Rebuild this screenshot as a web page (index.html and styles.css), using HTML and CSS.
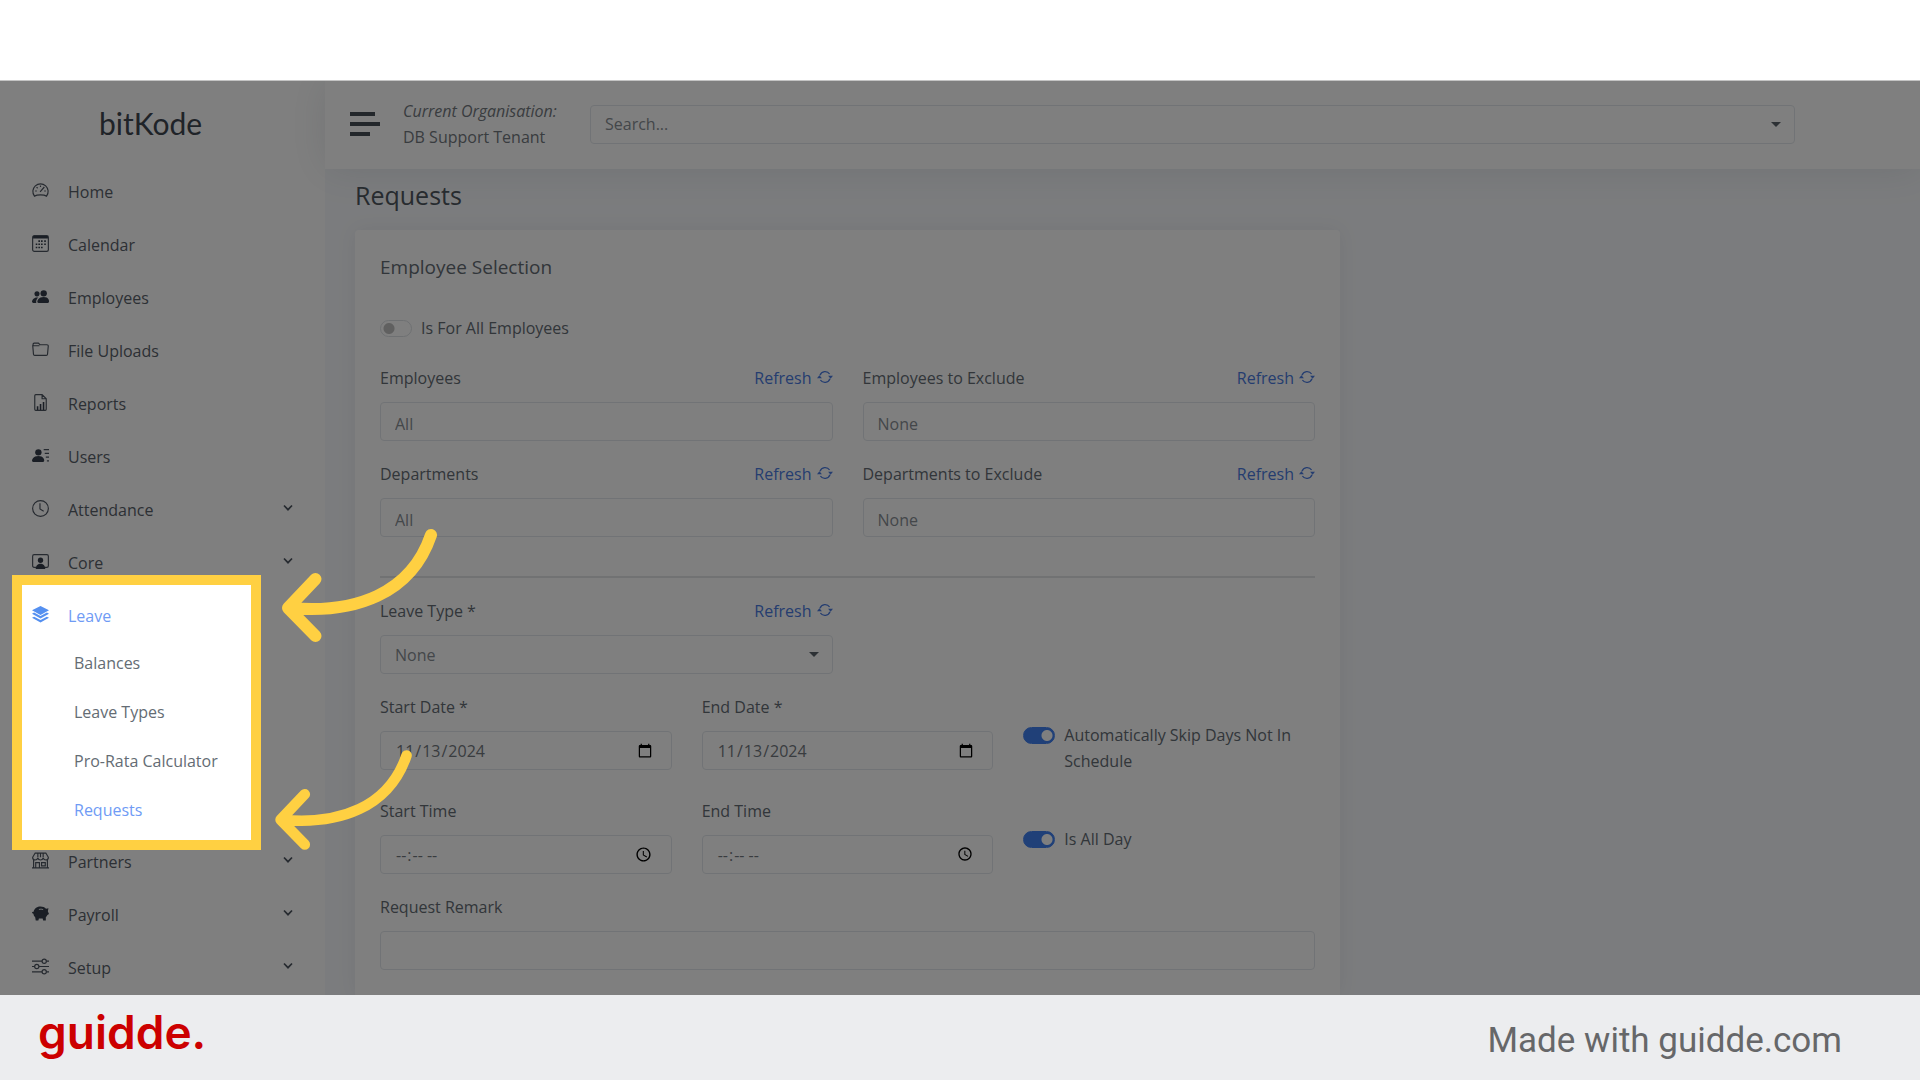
FILE: index.html
```html
<!DOCTYPE html>
<html lang="en-US">
<head>
<meta charset="utf-8">
<title>Requests</title>
<link rel="stylesheet" href="styles.css">
</head>
<body>
<svg class="defs" aria-hidden="true">
  <symbol id="refresh" viewBox="0 0 16 16"><path d="M3 6.2A5.4 5.4 0 0 1 12.6 5M13 9.8A5.4 5.4 0 0 1 3.4 11" fill="none" stroke="currentColor" stroke-width="1.3"/><path d="M0 9.2 2.4 6.2 4.9 9.2ZM16 6.8 13.6 9.8 11.1 6.8Z" fill="currentColor"/></symbol>
  <symbol id="chevron" viewBox="0 0 10 8"><path d="M1 1.5 5 5.7 9 1.5" fill="none" stroke="currentColor" stroke-width="1.7"/></symbol>
  <symbol id="arrow" viewBox="0 0 168 126"><path d="M39.500 57 12 86 39.500 114M14 86C79 92 135 72 155 13" fill="none" stroke="currentColor" stroke-width="12" stroke-linecap="round" stroke-linejoin="round"/></symbol>
</svg>

<main class="screen">
  <nav class="sidebar">
    <a class="brand" href="#">bitKode</a>
    <ul class="menu">
      <li><a class="item" href="#"><svg class="icon" viewBox="0 0 16 16"><path d="M2.300 13.300A7.200 7.200 0 1 1 13.700 13.300C11 11.800 5 11.800 2.300 13.300Z" class="line"/><path d="M8 3.200v1.600M3 8.500h1.500M11.500 8.500H13M4.300 4.900l1 1M7.600 9.300l4-4.600" class="line"/></svg>Home</a></li>
      <li><a class="item" href="#"><svg class="icon" viewBox="0 0 16 16"><rect x=".6" y=".6" width="14.800" height="14.800" rx="1.500" class="line"/><path d="M1 1h14v2.200H1ZM6 5h1.500v1.500H6ZM8.500 5H10v1.500H8.500ZM11.500 5H13v1.500h-1.500ZM3.500 8H5v1.500H3.500ZM6 8h1.500v1.500H6ZM8.500 8H10v1.500H8.500ZM11.500 8H13v1.500h-1.500ZM3.500 11H5v1.500H3.500ZM6 11h1.500v1.500H6ZM8.500 11H10v1.500H8.500Z"/></svg>Calendar</a></li>
      <li><a class="item" href="#"><svg class="icon" viewBox="0 0 16 16"><circle cx="11" cy="5" r="3"/><path d="M6 14s-1 0-1-1 1-4.500 6-4.500 5 3.500 5 4.500-1 1-1 1Z"/><circle cx="4.700" cy="5.500" r="2.400"/><path d="M4 14C3.500 11.500 5 9.800 6 9 2 8.300 0 11 0 13c0 1 1 1 1 1Z"/></svg>Employees</a></li>
      <li><a class="item" href="#"><svg class="icon" viewBox="0 0 16 16"><path d="M1 4.500V3Q1 2 2 2H6L7.500 3.500H14Q15.400 3.500 15.300 5L14.600 12.500Q14.500 13.500 13.500 13.500H2.500Q1.500 13.500 1.400 12.500L.7 4.500H7" class="line"/></svg>File Uploads</a></li>
      <li><a class="item" href="#"><svg class="icon" viewBox="0 0 16 16"><path d="M9.500.6H3.500Q2.600.6 2.600 1.600V14.400Q2.600 15.400 3.500 15.400H12.500Q13.400 15.400 13.400 14.400V4.500ZM9.500.6V4.500H13.400" class="line"/><path d="M4.500 11.500H6V15H4.500ZM7.300 9.500H8.800V15H7.300ZM10.100 7.500H11.600V15H10.100Z"/></svg>Reports</a></li>
      <li><a class="item" href="#"><svg class="icon" viewBox="0 0 16 16"><circle cx="6" cy="5" r="3"/><path d="M1 14s-1 0-1-1 1-4.500 6-4.500 5.500 3.500 5.500 4.500-1 1-1 1Z"/><path d="M11 2.500h5M12 6h4M13 9.500h3M14 13h2" class="line"/></svg>Users</a></li>
      <li><a class="item" href="#"><svg class="icon" viewBox="0 0 16 16"><circle cx="8" cy="8" r="7.400" class="line"/><path d="M7.500 3v5.500l3.500 2" class="line"/></svg>Attendance<svg class="caret"><use href="#chevron"/></svg></a></li>
      <li><a class="item" href="#"><svg class="icon" viewBox="0 0 16 16"><path d="M4 13.500H2Q.6 13.500.6 12V3Q.6 1.600 2 1.600H14Q15.400 1.600 15.400 3V12Q15.400 13.500 14 13.500H12" class="line"/><circle cx="8" cy="6.800" r="2.500"/><path d="M3.500 15C3.500 8.500 12.500 8.500 12.500 15Z"/></svg>Core<svg class="caret"><use href="#chevron"/></svg></a></li>
      <li>
        <a class="item active" href="#"><svg class="icon" viewBox="0 0 16 16"><path d="M8 0 16 4 8 8.500 0 4ZM0 7.200 2 6.200 8 9.500 14 6.200 16 7.200 8 11.700ZM0 11 2 10 8 13.200 14 10 16 11 8 15.500Z"/></svg>Leave</a>
        <ul class="submenu">
          <li><a class="subitem" href="#">Balances</a></li>
          <li><a class="subitem" href="#">Leave Types</a></li>
          <li><a class="subitem" href="#">Pro-Rata Calculator</a></li>
          <li><a class="subitem active" href="#">Requests</a></li>
        </ul>
      </li>
      <li><a class="item" href="#"><svg class="icon" viewBox="0 0 16 16"><path d="M3 1H13L15.400 5Q15.400 7.500 13.200 7.500 11 7.500 10.500 5.500 10 7.500 8 7.500 6 7.500 5.500 5.500 5 7.500 2.800 7.500.6 7.500.6 5ZM5.500 1V5M8 1V5M10.500 1V5M1.500 7.500V15M14.500 7.500V15M0 15H16M3.500 15V10H7V15M9 10H12.500V13H9Z" class="line"/></svg>Partners<svg class="caret"><use href="#chevron"/></svg></a></li>
      <li><a class="item" href="#"><svg class="icon" viewBox="0 0 16 16"><path d="M8 1.500C10 1.500 12 2.200 13.200 3.500L15.500 3 14.900 5.800 16 8.500 14.500 9.500Q13.800 10.800 13 11.500V14.500H10.500L10 12.800H6.500L6 14.500H3.500L3 11.500Q1.500 10.300 1.300 8.300Q0 8 0 6.500L1.500 6.300C2.200 3.300 5 1.500 8 1.500Z"/><path d="M6.500 4.200Q8.500 3.500 10.500 4.300" fill="none" stroke="#fff" stroke-width=".8"/></svg>Payroll<svg class="caret"><use href="#chevron"/></svg></a></li>
      <li><a class="item" href="#"><svg class="icon" viewBox="0 0 16 16"><path d="M0 3H9.500M13.500 3H16M0 8H2.500M6.500 8H16M0 13H9.500M13.500 13H16" class="line"/><circle cx="11.500" cy="3" r="2" class="line"/><circle cx="4.500" cy="8" r="2" class="line"/><circle cx="11.500" cy="13" r="2" class="line"/></svg>Setup<svg class="caret"><use href="#chevron"/></svg></a></li>
    </ul>
  </nav>

  <div class="content">
    <header class="topbar">
      <button class="burger" type="button" aria-label="Toggle menu"><span class="bar mid"></span><span class="bar"></span><span class="bar short"></span></button>
      <p class="org"><em>Current Organisation:</em><br>DB Support Tenant</p>
      <div class="select-wrap search"><select class="control" aria-label="Search"><option>Search...</option></select></div>
    </header>

    <section class="page">
      <h1 class="page-title">Requests</h1>
      <form class="card">
        <h2 class="card-title">Employee Selection</h2>
        <label class="check"><input class="switch" type="checkbox">Is For All Employees</label>

        <div class="grid two">
          <div class="field">
            <div class="field-head"><label for="emp">Employees</label><a class="refresh" href="#">Refresh <svg class="refresh-icon"><use href="#refresh"/></svg></a></div>
            <input class="control tags" id="emp" type="text" placeholder="All">
          </div>
          <div class="field">
            <div class="field-head"><label for="empx">Employees to Exclude</label><a class="refresh" href="#">Refresh <svg class="refresh-icon"><use href="#refresh"/></svg></a></div>
            <input class="control tags" id="empx" type="text" placeholder="None">
          </div>
          <div class="field">
            <div class="field-head"><label for="dep">Departments</label><a class="refresh" href="#">Refresh <svg class="refresh-icon"><use href="#refresh"/></svg></a></div>
            <input class="control tags" id="dep" type="text" placeholder="All">
          </div>
          <div class="field">
            <div class="field-head"><label for="depx">Departments to Exclude</label><a class="refresh" href="#">Refresh <svg class="refresh-icon"><use href="#refresh"/></svg></a></div>
            <input class="control tags" id="depx" type="text" placeholder="None">
          </div>
        </div>

        <hr class="rule">

        <div class="grid two">
          <div class="field">
            <div class="field-head"><label for="type">Leave Type *</label><a class="refresh" href="#">Refresh <svg class="refresh-icon"><use href="#refresh"/></svg></a></div>
            <div class="select-wrap"><select class="control" id="type"><option>None</option></select></div>
          </div>
        </div>

        <div class="grid three">
          <div class="field">
            <div class="field-head"><label for="sd">Start Date *</label></div>
            <input class="control dark" id="sd" type="date" value="2024-11-13">
          </div>
          <div class="field">
            <div class="field-head"><label for="ed">End Date *</label></div>
            <input class="control dark" id="ed" type="date" value="2024-11-13">
          </div>
          <label class="check side"><input class="switch" type="checkbox" checked>Automatically Skip Days Not In Schedule</label>
          <div class="field">
            <div class="field-head"><label for="st">Start Time</label></div>
            <input class="control dark" id="st" type="time">
          </div>
          <div class="field">
            <div class="field-head"><label for="et">End Time</label></div>
            <input class="control dark" id="et" type="time">
          </div>
          <label class="check side"><input class="switch" type="checkbox" checked>Is All Day</label>
        </div>

        <div class="field">
          <div class="field-head"><label for="remark">Request Remark</label></div>
          <input class="control" id="remark" type="text">
        </div>
      </form>
    </section>
  </div>

  <div class="spotlight"></div>
  <svg class="pointer first"><use href="#arrow"/></svg>
  <svg class="pointer second"><use href="#arrow"/></svg>
</main>

<footer class="footer">
  <a class="logo" href="#">guidde.</a>
  <p class="credit">Made with guidde.com</p>
</footer>
</body>
</html>
```
FILE: styles.css
```css
* { box-sizing: border-box; }
body {
  margin: 0;
  min-height: 100vh;
  display: flex;
  flex-direction: column;
  padding-top: 80px;
  background: #fff;
  color: #646c74;
  font: 16px/26px "Open Sans", "Noto Sans", sans-serif;
}
h1, h2, p, ul { margin: 0; padding: 0; font-weight: 400; }
ul { list-style: none; }
a { color: inherit; text-decoration: none; }
.defs { position: absolute; width: 0; height: 0; }

.screen {
  position: relative;
  flex: 1;
  display: flex;
  overflow: hidden;
  border-top: 1px solid #c4c4c4;
}

/* Sidebar */
.sidebar {
  width: 325px;
  flex: none;
  background: #fff;
}
.brand {
  display: block;
  height: 84px;
  padding-left: 99px;
  color: #3e4650;
  font: 30px/84px Lato, sans-serif;
}
.item {
  display: flex;
  align-items: center;
  height: 53px;
  padding: 0 32px;
  color: #59616a;
}
.icon {
  width: 17px;
  height: 17px;
  margin-right: 19px;
  margin-bottom: 2px;
  fill: #343d4a;
}
.line { fill: none; stroke: #4d5560; stroke-width: 1.1; }
.caret { width: 10px; height: 8px; margin-left: auto; margin-bottom: 4px; color: #4d5560; }
.submenu { margin-top: -3px; }
.subitem { display: block; padding-left: 74px; line-height: 49px; }
.active { color: #6f9bf5; }
.active .icon { fill: #5590f0; }

/* Content */
.content {
  flex: 1;
  min-width: 0;
  display: flex;
  flex-direction: column;
  background: #f7f9fc;
}
.topbar {
  position: relative;
  display: flex;
  align-items: center;
  height: 88px;
  padding: 0 125px 2px 25px;
  background: #fff;
  box-shadow: 0 0 40px rgba(60, 70, 90, .12);
}
.burger {
  display: flex;
  flex-direction: column;
  gap: 6px;
  width: 30px;
  margin-right: 23px;
  padding: 0;
  border: 0;
  background: none;
}
.bar { width: 30px; height: 4px; background: #474f57; }
.bar.mid { width: 25px; }
.bar.short { width: 20px; }
.org { width: 187px; flex: none; color: #73797f; white-space: nowrap; }
.search { flex: 1; }

.page {
  flex: 1;
  display: flex;
  flex-direction: column;
  padding: 9px 30px 0;
}
.page-title { margin-bottom: 18px; color: #4f575f; font-size: 25px; line-height: 34px; }
.card {
  flex: 1;
  width: 100%;
  max-width: 985px;
  padding: 24px 25px 24px;
  border-radius: 4px 4px 0 0;
  background: #fff;
  box-shadow: 0 0 20px rgba(60, 70, 90, .08);
}
.card-title { margin-bottom: 35px; font-size: 19px; line-height: 26px; }
.check { display: flex; margin-bottom: 24px; }
.check.side { padding-top: 28px; margin: 0; }
.grid { display: grid; column-gap: 30px; row-gap: 20px; }
.two { grid-template-columns: 1fr 1fr; margin-bottom: 20px; }
.three { grid-template-columns: 1fr 1fr 1fr; row-gap: 24px; margin-bottom: 20px; }
.rule { margin: 39px 0 20px; border: 0; border-top: 2px solid #e2e4e7; }
.two:has(+ .rule) { margin-bottom: 0; }

.field-head { display: flex; justify-content: space-between; margin-bottom: 11px; }
.refresh { display: flex; align-items: center; gap: 5px; color: #4a7be0; font-weight: 500; }
.refresh-icon { width: 16px; height: 16px; margin-bottom: 2px; }

.control {
  display: block;
  width: 100%;
  height: 39px;
  padding: 0 14px;
  border: 1px solid #e3e7ec;
  border-radius: 4px;
  background: #fff;
  color: #888e94;
  font: inherit;
  appearance: none;
}
.control.dark { color: #73797f; padding-right: 16px; }
.control.tags { padding-top: 5px; }
.control::placeholder { color: #888e94; opacity: 1; }
.select-wrap { position: relative; }
.select-wrap::after {
  content: "";
  position: absolute;
  right: 14px;
  top: 17px;
  border: 5px solid transparent;
  border-top-color: #5b636b;
  border-bottom: 0;
}

.switch {
  flex: none;
  width: 32px;
  height: 17px;
  margin: 5px 9px 0 0;
  border: 1px solid #dde1e5;
  border-radius: 9px;
  background: radial-gradient(circle at 8px 50%, #c0c0c0 5px, transparent 6px);
  appearance: none;
}
.switch:checked {
  border-color: #4080f0;
  background: radial-gradient(circle at 23px 50%, #fff 5px, #4080f0 6px);
}

/* Walkthrough overlay: dims everything outside the framed menu group */
.spotlight {
  position: absolute;
  left: 12px;
  top: 494px;
  width: 249px;
  height: 275px;
  border: 10px solid #ffd042;
  box-shadow: 0 0 0 3000px rgba(0, 0, 0, .5);
  pointer-events: none;
}
.pointer { position: absolute; color: #ffd042; pointer-events: none; }
.pointer.first { left: 276px; top: 441px; width: 168px; height: 126px; }
.pointer.second { left: 270px; top: 663px; width: 148px; height: 111px; }

.footer {
  display: flex;
  align-items: center;
  justify-content: space-between;
  height: 85px;
  padding: 0 78px 0 38px;
  background: #ecedef;
}
.logo { color: #c00; font: 600 46px/60px Inter, sans-serif; padding-bottom: 12px; }
.credit { color: #666769; font: 35px/48px Roboto, sans-serif; padding-top: 6px; }
```
